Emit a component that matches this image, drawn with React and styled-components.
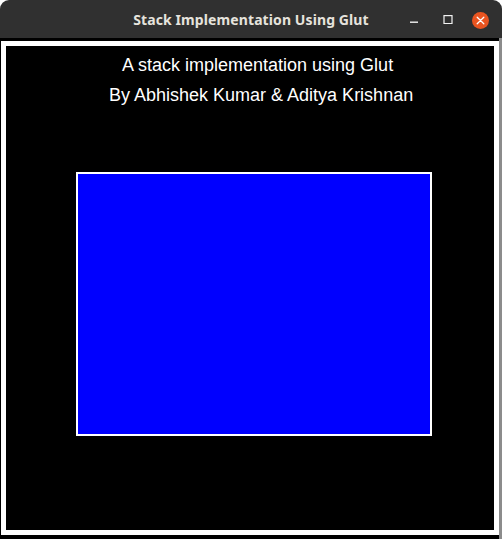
import React from "react";
import styled, { createGlobalStyle } from "styled-components";

const Global = createGlobalStyle`
  html, body { margin: 0; padding: 0; background: #ffffff; }
  body { width: 502px; height: 539px; overflow: hidden; }
`;

const Window = styled.div`
  width: 502px;
  height: 539px;
  display: flex;
  flex-direction: column;
`;

const TitleBar = styled.div`
  height: 38px;
  flex: none;
  background: #303030;
  border-radius: 9px 9px 0 0;
  display: flex;
  align-items: center;
  position: relative;
`;

const Title = styled.div`
  position: absolute;
  left: 0;
  right: 0;
  top: 0;
  height: 38px;
  line-height: 40px;
  text-align: center;
  color: #e6e3dd;
  font-family: "Noto Sans", "DejaVu Sans", sans-serif;
  font-weight: 700;
  font-size: 14px;
  letter-spacing: 0.1px;
`;

const Controls = styled.div`
  margin-left: auto;
  display: flex;
  align-items: center;
  padding-right: 13px;
  position: relative;
`;

const CtlButton = styled.div`
  width: 34px;
  height: 20px;
  margin-right: ${(p) => p.$gap || 0}px;
  display: flex;
  align-items: center;
  justify-content: center;
`;

const CloseButton = styled.div`
  width: 17px;
  height: 17px;
  border-radius: 50%;
  background: #e95420;
  display: flex;
  align-items: center;
  justify-content: center;
  margin-top: 2px;
`;

const Canvas = styled.div`
  flex: 1;
  background: #000;
  padding: 3px 0 4px 1px;
  border-right: 3px solid #8c8c8c;
  display: flex;
`;

const Frame = styled.div`
  flex: 1;
  border: 5px solid #ffffff;
  display: flex;
  flex-direction: column;
`;

const Line = styled.div`
  color: #ffffff;
  font-family: "Liberation Sans", Arial, sans-serif;
  font-size: 18px;
  line-height: 20px;
  white-space: nowrap;
  padding-left: ${(p) => p.$x}px;
  margin-top: ${(p) => p.$top}px;
`;

const StackBox = styled.div`
  margin-left: 70px;
  margin-top: ${(p) => p.$top}px;
  width: 356px;
  height: 264px;
  box-sizing: border-box;
  background: #0000ff;
  border: 2px solid #ffffff;
`;

export default function App() {
  return (
    <>
      <Global />
      <Window>
        <TitleBar>
          <Title>Stack Implementation Using Glut</Title>
          <Controls>
            <CtlButton>
              <svg width="10" height="10" viewBox="0 0 10 10">
                <rect x="1" y="7.5" width="8" height="1.4" fill="#f2f2f2" />
              </svg>
            </CtlButton>
            <CtlButton $gap={7}>
              <svg width="10" height="10" viewBox="0 0 10 10">
                <rect x="1" y="1.6" width="8" height="8" fill="none" stroke="#f2f2f2" strokeWidth="1.2" />
              </svg>
            </CtlButton>
            <CloseButton>
              <svg width="9" height="9" viewBox="0 0 9 9">
                <path d="M1.2 1.2 L7.8 7.8 M7.8 1.2 L1.2 7.8" stroke="#ffffff" strokeWidth="1.3" strokeLinecap="round" />
              </svg>
            </CloseButton>
          </Controls>
        </TitleBar>
        <Canvas>
          <Frame>
            <Line $x={116} $top={9}>A stack implementation using Glut</Line>
            <Line $x={103} $top={10}>By Abhishek Kumar &amp; Aditya Krishnan</Line>
            <StackBox $top={67} />
          </Frame>
        </Canvas>
      </Window>
    </>
  );
}
